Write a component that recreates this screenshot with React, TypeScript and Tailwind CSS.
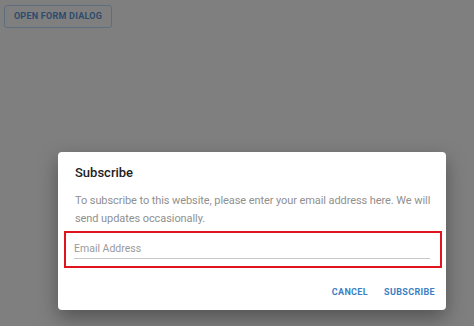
export default function App() {
  return (
    <div className="flex h-[326px] w-[474px] flex-col overflow-hidden bg-[#7f7f7f] font-['Roboto',sans-serif]">
      <div className="flex pl-[4px] pt-[5px]">
        <div className="flex h-[23px] w-[108px] items-center justify-center rounded-[3px] border border-[#5f6e7e] text-[9px] font-bold tracking-[0.25px] text-[#2e4b6c]">
          OPEN FORM DIALOG
        </div>
      </div>
      <div className="ml-[58px] mt-[124px] flex h-[158px] w-[388px] flex-col rounded-[4px] bg-white shadow-[0_8px_20px_rgba(0,0,0,0.35)]">
        <div className="px-[17px] pt-[12px] text-[13px] leading-[18px] font-medium text-[#222]">Subscribe</div>
        <div className="mt-[10px] pl-[17px] pr-[8px] text-[11px] leading-[18px] tracking-[-0.08px] text-[#909090]">
          To subscribe to this website, please enter your email address here. We will send updates occasionally.
        </div>
        <div className="mt-[3px] ml-[6px] mr-[4px] h-[37px] border-2 border-[#e0141e] pl-[8px] pr-[10px] pt-[8px]">
          <div className="h-[18px] border-b border-[#c8c8c8] text-[10.5px] leading-[16px] text-[#9a9a9a]">
            Email Address
          </div>
        </div>
        <div className="mt-[17px] flex justify-end gap-[16px] pr-[11px] text-[9px] leading-[14px] font-bold tracking-[0.35px] text-[#3b7fc4]">
          <span>CANCEL</span>
          <span>SUBSCRIBE</span>
        </div>
      </div>
    </div>
  );
}
